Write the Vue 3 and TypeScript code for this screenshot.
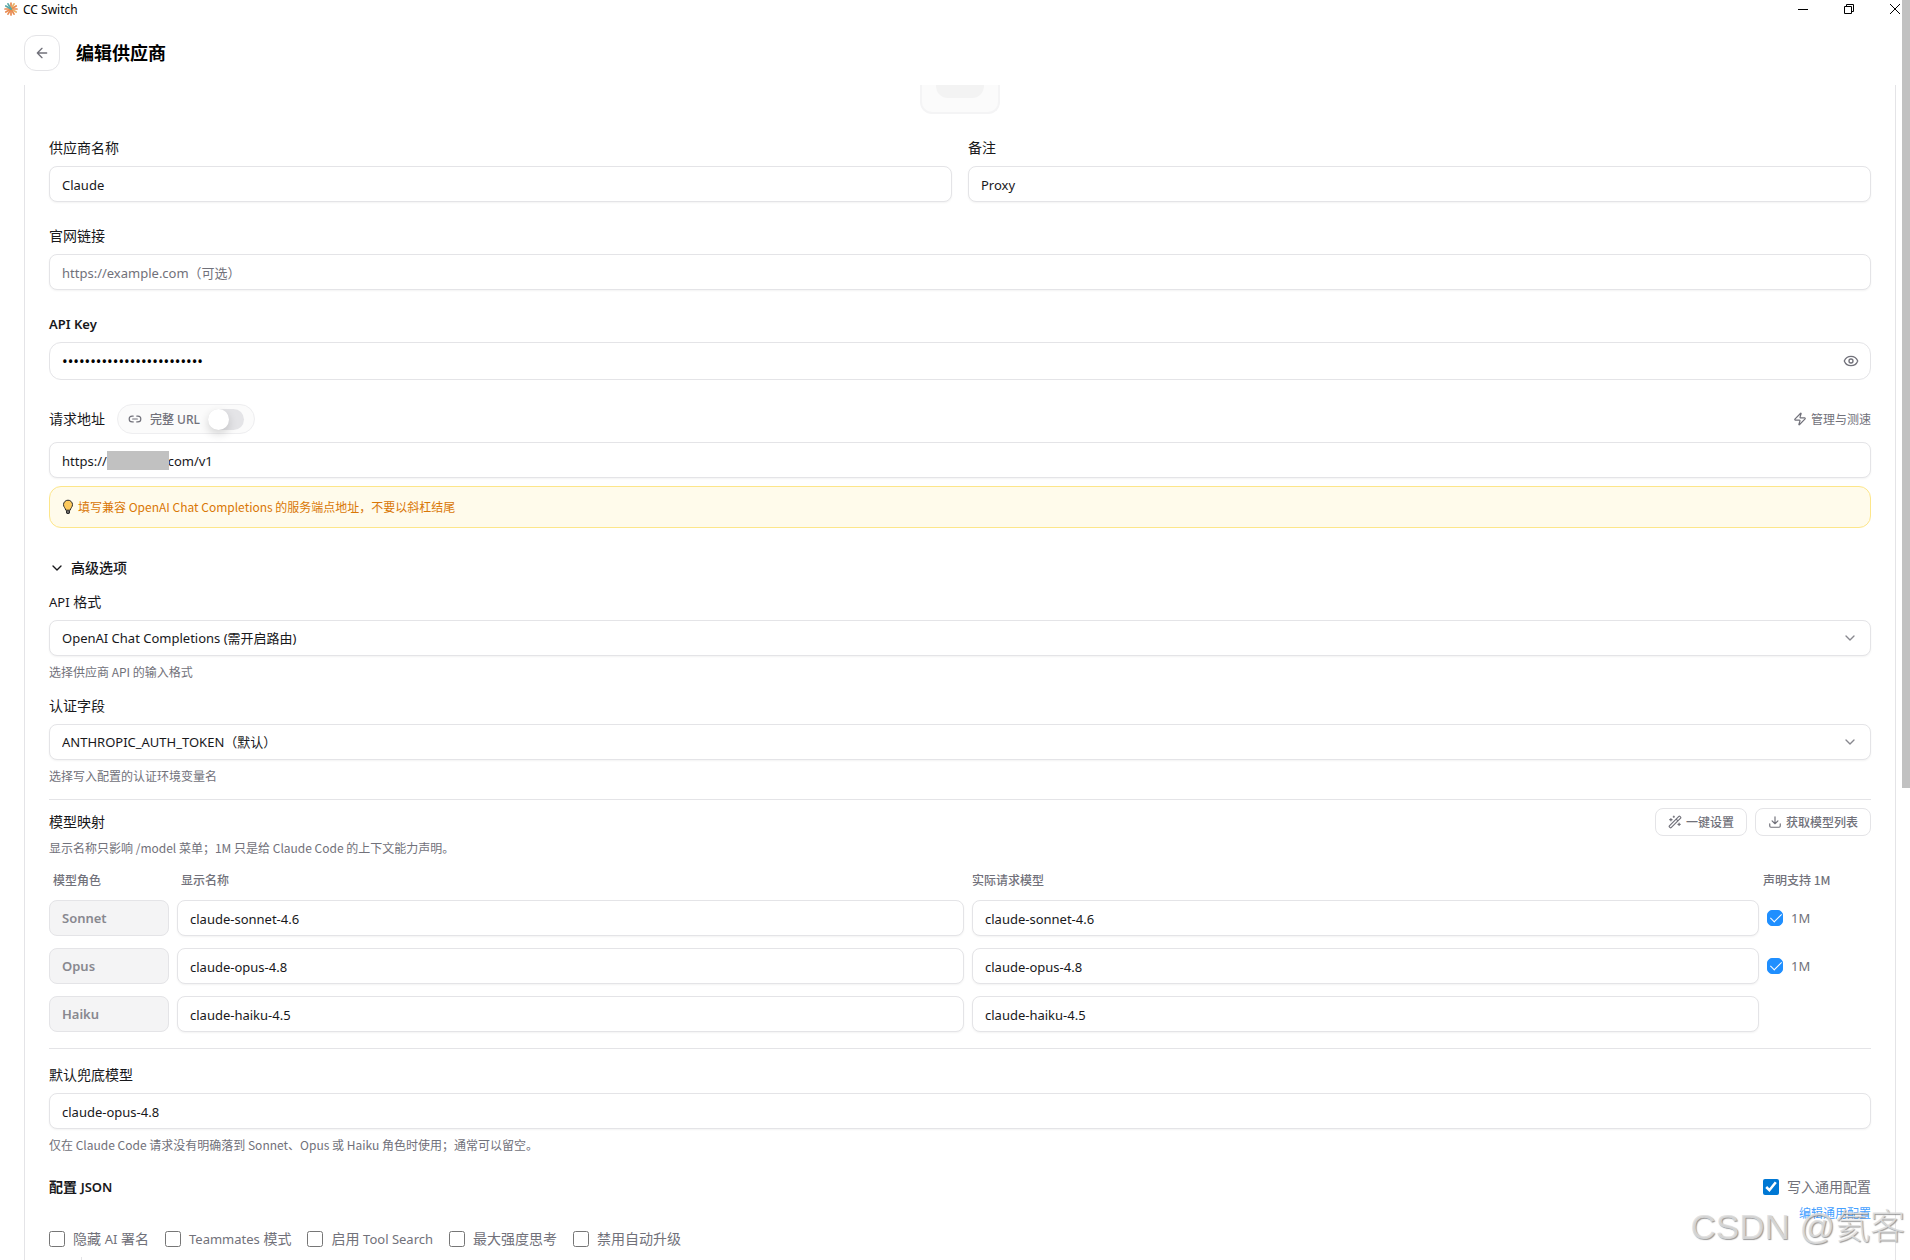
<script setup lang="ts">
import { ref } from 'vue'

interface ModelRow {
  role: string
  display: string
  actual: string
  supports1M: boolean | null
}

interface Toggle {
  id: string
  before: string
  latin: string
  after: string
}

const providerName = ref('Claude')
const notes = ref('Proxy')
const website = ref('')
const apiKey = ref('x'.repeat(25))
const baseUrl = ref(`https://${' '.repeat(18)}com/v1`)
const fullUrl = ref(false)
const fallbackModel = ref('claude-opus-4.8')
const writeCommon = ref(true)

const models = ref<ModelRow[]>([
  { role: 'Sonnet', display: 'claude-sonnet-4.6', actual: 'claude-sonnet-4.6', supports1M: true },
  { role: 'Opus', display: 'claude-opus-4.8', actual: 'claude-opus-4.8', supports1M: true },
  { role: 'Haiku', display: 'claude-haiku-4.5', actual: 'claude-haiku-4.5', supports1M: null },
])

const toggles: Toggle[] = [
  { id: 'hide-ai', before: '隐藏 ', latin: 'AI', after: ' 署名' },
  { id: 'teammates', before: '', latin: 'Teammates', after: ' 模式' },
  { id: 'tool-search', before: '启用 ', latin: 'Tool Search', after: '' },
  { id: 'max-think', before: '最大强度思考', latin: '', after: '' },
  { id: 'no-upgrade', before: '禁用自动升级', latin: '', after: '' },
]

const rays = Array.from({ length: 12 }, (_, i) => i * 30)
</script>

<template>
  <div class="window">
    <div class="main">
      <div class="titlebar">
        <svg class="logo" viewBox="0 0 14 14" aria-hidden="true">
          <g stroke-width="1.7" stroke-linecap="round">
            <line
              v-for="a in rays"
              :key="a"
              x1="7"
              y1="7"
              x2="7"
              y2="1"
              :stroke="a > 280 && a < 340 ? '#5aa7a5' : a === 30 || a === 120 ? '#e9b266' : '#e88a50'"
              :transform="`rotate(${a} 7 7)`"
            />
          </g>
        </svg>
        <span class="app-name">CC Switch</span>
        <div class="win-controls">
          <button type="button" aria-label="最小化">
            <svg viewBox="0 0 10 10"><path d="M0 5.5h10" /></svg>
          </button>
          <button type="button" aria-label="还原">
            <svg viewBox="0 0 10 10"><path d="M.5 2.5h7v7h-7zM2.500 2.500v-2h7v7h-2" /></svg>
          </button>
          <button type="button" aria-label="关闭">
            <svg viewBox="0 0 10 10"><path d="M0 0l10 10M10 0L0 10" /></svg>
          </button>
        </div>
      </div>

      <header class="header">
        <button type="button" class="back" aria-label="返回">
          <svg class="icon" viewBox="0 0 24 24"><path d="m12 19-7-7 7-7M19 12H5" /></svg>
        </button>
        <h1>编辑供应商</h1>
      </header>

      <form class="card" @submit.prevent>
        <div class="picker"><div class="picker-inner"></div></div>

        <div class="two-col">
          <div class="field">
            <label for="name">供应商名称</label>
            <input id="name" v-model="providerName" class="control" type="text" />
          </div>
          <div class="field">
            <label for="notes">备注</label>
            <input id="notes" v-model="notes" class="control" type="text" />
          </div>
        </div>

        <div class="field">
          <label for="site">官网链接</label>
          <input id="site" v-model="website" class="control" type="url" placeholder="https://example.com（可选）" />
        </div>

        <div class="field">
          <label for="key" class="strong"><span class="en">API Key</span></label>
          <div class="key-box">
            <input id="key" v-model="apiKey" type="password" />
            <button type="button" aria-label="显示密钥">
              <svg class="icon" viewBox="0 0 24 24">
                <path d="M2.062 12.348a1 1 0 0 1 0-.696 10.750 10.750 0 0 1 19.876 0 1 1 0 0 1 0 .696 10.750 10.750 0 0 1-19.876 0" />
                <circle cx="12" cy="12" r="3" />
              </svg>
            </button>
          </div>
        </div>

        <div class="field">
          <div class="row url-head">
            <label for="url">请求地址</label>
            <label class="pill">
              <svg class="icon" viewBox="0 0 24 24"><path d="M9 17H7A5 5 0 0 1 7 7h2M15 7h2a5 5 0 1 1 0 10h-2M8 12h8" /></svg>
              <span class="small">完整 URL</span>
              <input v-model="fullUrl" type="checkbox" role="switch" class="switch" />
            </label>
            <button type="button" class="text-btn push">
              <svg class="icon" viewBox="0 0 24 24"><path d="M4 14a1 1 0 0 1-.78-1.630l9.900-10.200a.5.5 0 0 1 .86.460l-1.920 6.020A1 1 0 0 0 13 10h7a1 1 0 0 1 .78 1.630l-9.900 10.200a.5.5 0 0 1-.86-.460l1.920-6.020A1 1 0 0 0 11 14z" /></svg>
              <span class="small">管理与测速</span>
            </button>
          </div>
          <div class="url-box">
            <input id="url" v-model="baseUrl" class="control" type="text" />
            <span class="mask"></span>
          </div>
          <p class="notice">
            <svg class="bulb" viewBox="0 0 12 16" aria-hidden="true">
              <path d="M6 1.200a4.500 4.500 0 0 0-4.500 4.500c0 2.300 1.900 3.300 2.300 5.500h4.400c.4-2.200 2.300-3.200 2.300-5.500A4.500 4.500 0 0 0 6 1.200z" fill="#fcc95c" stroke="#2b2b2b" stroke-width="1" />
              <path d="M4 11.500h4v2.200L7 15H5l-1-1.300z" fill="#2b2b2b" />
              <path d="M5.300 13h1.400" stroke="#ddd" stroke-width="1" />
            </svg>
            <span>填写兼容 OpenAI Chat Completions 的服务端点地址，不要以斜杠结尾</span>
          </p>
        </div>

        <div class="advanced">
          <button type="button" class="disclosure" aria-expanded="true">
            <svg class="icon" viewBox="0 0 24 24"><path d="m6 9 6 6 6-6" /></svg>
            高级选项
          </button>

          <div class="field">
            <label for="format"><span class="en">API</span> 格式</label>
            <div class="select-box">
              <select id="format" class="control">
                <option>OpenAI Chat Completions (需开启路由)</option>
              </select>
              <svg class="icon" viewBox="0 0 24 24"><path d="m6 9 6 6 6-6" /></svg>
            </div>
            <p class="help">选择供应商 API 的输入格式</p>
          </div>

          <div class="field next">
            <label for="auth">认证字段</label>
            <div class="select-box">
              <select id="auth" class="control">
                <option>ANTHROPIC_AUTH_TOKEN（默认）</option>
              </select>
              <svg class="icon" viewBox="0 0 24 24"><path d="m6 9 6 6 6-6" /></svg>
            </div>
            <p class="help">选择写入配置的认证环境变量名</p>
          </div>
        </div>

        <section class="mapping">
          <div class="row">
            <h2>模型映射</h2>
            <button type="button" class="outline push">
              <svg class="icon" viewBox="0 0 24 24"><path d="m21.640 3.640-1.280-1.280a1.210 1.210 0 0 0-1.720 0L2.360 18.640a1.210 1.210 0 0 0 0 1.720l1.280 1.280a1.200 1.200 0 0 0 1.720 0L21.640 5.360a1.200 1.200 0 0 0 0-1.720M14 7l3 3M5 6v4M19 14v4M10 2v2M7 8H3M21 16h-4M11 3H9" /></svg>
              <span class="small">一键设置</span>
            </button>
            <button type="button" class="outline">
              <svg class="icon" viewBox="0 0 24 24"><path d="M21 15v4a2 2 0 0 1-2 2H5a2 2 0 0 1-2-2v-4M7 10l5 5 5-5M12 15V3" /></svg>
              <span class="small">获取模型列表</span>
            </button>
          </div>
          <p class="help">显示名称只影响 /model 菜单；1M 只是给 Claude Code 的上下文能力声明。</p>

          <div class="grid grid-head">
            <span>模型角色</span>
            <span>显示名称</span>
            <span>实际请求模型</span>
            <span>声明支持 1M</span>
          </div>
          <div v-for="m in models" :key="m.role" class="grid">
            <div class="role">{{ m.role }}</div>
            <input v-model="m.display" class="control" type="text" :aria-label="`${m.role} 显示名称`" />
            <input v-model="m.actual" class="control" type="text" :aria-label="`${m.role} 实际请求模型`" />
            <label v-if="m.supports1M !== null" class="check">
              <input v-model="m.supports1M" type="checkbox" class="round-check" />
              <span class="en">1M</span>
            </label>
          </div>
        </section>

        <section class="fallback">
          <div class="field">
            <label for="fallback">默认兜底模型</label>
            <input id="fallback" v-model="fallbackModel" class="control" type="text" />
            <p class="help">仅在 Claude Code 请求没有明确落到 Sonnet、Opus 或 Haiku 角色时使用；通常可以留空。</p>
          </div>
        </section>

        <section class="json">
          <div class="row">
            <h2 class="strong">配置 <span class="en">JSON</span></h2>
            <label class="check push">
              <input v-model="writeCommon" type="checkbox" />
              <span>写入通用配置</span>
            </label>
          </div>
          <a href="#" class="edit-link">编辑通用配置</a>
          <div class="toggles">
            <label v-for="t in toggles" :key="t.id" class="check">
              <input type="checkbox" />
              <span>{{ t.before }}<span class="en">{{ t.latin }}</span>{{ t.after }}</span>
            </label>
          </div>
          <div class="editor"></div>
        </section>
      </form>
    </div>

    <div class="scrollbar"><div class="thumb"></div></div>
    <div class="watermark">CSDN @氦客</div>
  </div>
</template>

<style>
body {
  background: #fff;
}
</style>

<style scoped>
* {
  box-sizing: border-box;
}
.window {
  position: relative;
  display: flex;
  height: 100vh;
  overflow: hidden;
  font-family: "Noto Sans", "Noto Sans CJK SC", sans-serif;
  font-size: 14px;
  line-height: 20px;
  color: #18181b;
}
button,
input,
select {
  font: inherit;
  color: inherit;
}
button {
  padding: 0;
  border: 0;
  background: none;
}
h1,
h2,
p {
  margin: 0;
}
.en {
  font-size: 13px;
}
.small {
  padding-top: 2px;
}
.icon {
  flex: none;
  width: 16px;
  height: 16px;
  fill: none;
  stroke: currentColor;
  stroke-width: 2;
  stroke-linecap: round;
  stroke-linejoin: round;
}
.main {
  flex: 1;
  min-width: 0;
  display: flex;
  flex-direction: column;
}
.titlebar {
  flex: none;
  display: flex;
  align-items: center;
  height: 18px;
  padding-left: 4px;
  color: #000;
}
.logo {
  width: 14px;
  height: 14px;
}
.app-name {
  margin-left: 5px;
  padding-top: 2px;
  font-size: 12px;
  line-height: 16px;
}
.win-controls {
  display: flex;
  gap: 36px;
  margin-left: auto;
  padding-right: 2px;
}
.win-controls button {
  display: flex;
}
.win-controls svg {
  width: 10px;
  height: 10px;
  fill: none;
  stroke: #000;
}
.header {
  flex: none;
  display: flex;
  align-items: center;
  gap: 16px;
  height: 67px;
  padding: 3px 24px 0;
}
.back {
  display: flex;
  align-items: center;
  justify-content: center;
  width: 36px;
  height: 36px;
  border: 1px solid #e4e4e7;
  border-radius: 12px;
  color: #71717a;
}
h1 {
  font-size: 18px;
  line-height: 28px;
  font-weight: 700;
  color: #000;
}
.card {
  flex: 1;
  min-height: 0;
  overflow: hidden;
  margin: 0 6px 0 24px;
  padding: 0 24px;
  border: solid #e4e4e7;
  border-width: 0 1px;
}
.picker {
  width: 80px;
  height: 29px;
  margin: 0 auto 24px;
  padding: 0 14px;
  border: 2px solid #f4f4f5;
  border-top: 0;
  border-radius: 0 0 12px 12px;
  background: #fbfbfb;
}
.picker-inner {
  height: 13px;
  border-radius: 0 0 12px 12px;
  background: #f3f3f3;
}
.two-col {
  display: grid;
  grid-template-columns: 1fr 1fr;
  gap: 16px;
  margin-bottom: 24px;
}
.field {
  display: flex;
  flex-direction: column;
  gap: 8px;
}
.card > .field {
  margin-bottom: 24px;
}
.field.next {
  margin-top: 14px;
}
.strong {
  font-weight: 600;
}
.control {
  display: block;
  width: 100%;
  height: 36px;
  padding: 2px 12px 0;
  border: 1px solid #e4e4e7;
  border-radius: 8px;
  background: #fff;
  box-shadow: 0 1px 2px rgba(0, 0, 0, 0.05);
  font-size: 13px;
  outline: 0;
  appearance: none;
}
.control::placeholder {
  color: #71717a;
}
select.control {
  padding-top: 0;
}
.key-box {
  display: flex;
  align-items: center;
  height: 38px;
  padding: 0 11px 0 12px;
  border: 1px solid #e4e4e7;
  border-radius: 12px;
}
.key-box input {
  flex: 1;
  padding: 0;
  border: 0;
  outline: 0;
  background: none;
  font-size: 15px;
  color: #000;
}
.key-box button {
  display: flex;
  color: #71717a;
}
.row {
  display: flex;
  align-items: center;
  gap: 8px;
}
.push {
  margin-left: auto;
}
.url-head {
  gap: 12px;
}
.pill {
  display: flex;
  align-items: center;
  gap: 8px;
  height: 30px;
  padding: 0 10px;
  border: 1px solid #eeeef0;
  border-radius: 15px;
  background: #fbfbfb;
  color: #71717a;
  font-size: 12px;
  font-weight: 500;
}
.pill .icon {
  width: 14px;
  height: 14px;
}
.switch {
  appearance: none;
  width: 36px;
  height: 21px;
  margin: 0;
  border-radius: 11px;
  background: #e4e4e7;
}
.switch::before {
  content: "";
  display: block;
  width: 21px;
  height: 21px;
  border-radius: 50%;
  background: #fff;
  box-shadow: 0 4px 10px rgba(0, 0, 0, 0.16);
}
.switch:checked::before {
  margin-left: auto;
}
.text-btn {
  display: flex;
  align-items: center;
  gap: 4px;
  font-size: 12px;
  color: #71717a;
}
.text-btn .icon,
.outline .icon {
  width: 14px;
  height: 14px;
}
.url-box,
.select-box {
  position: relative;
}
.mask {
  position: absolute;
  left: 58px;
  top: 9px;
  width: 62px;
  height: 19px;
  background: #c1c1c1;
}
.notice {
  display: flex;
  align-items: center;
  gap: 4px;
  height: 42px;
  padding: 0 12px;
  border: 1px solid #fde68a;
  border-radius: 12px;
  background: #fffbeb;
  font-size: 12px;
  color: #d97706;
}
.notice,
.help,
.grid-head {
  font-family: "Noto Sans CJK SC", sans-serif;
}
.bulb {
  width: 12px;
  height: 16px;
}
.disclosure {
  display: flex;
  align-items: center;
  gap: 6px;
  height: 32px;
  margin-bottom: 8px;
  font-weight: 500;
}
.select-box .icon {
  position: absolute;
  right: 13px;
  top: 10px;
  color: #88888f;
  pointer-events: none;
}
.help {
  font-size: 12px;
  line-height: 16px;
  color: #71717a;
}
.field.next {
  margin-top: 16px;
}
.mapping {
  margin-top: 15px;
  padding-top: 8px;
  border-top: 1px solid #e4e4e7;
}
h2 {
  font-size: 14px;
  line-height: 20px;
  font-weight: 400;
}
h2.strong {
  font-weight: 600;
}
.outline {
  display: flex;
  align-items: center;
  gap: 4px;
  height: 28px;
  padding: 0 12px;
  border: 1px solid #e4e4e7;
  border-radius: 8px;
  font-size: 12px;
  font-weight: 500;
  color: #71717a;
}
.mapping .help {
  margin-top: 4px;
}
.grid {
  display: grid;
  grid-template-columns: 120px 1fr 1fr 104px;
  gap: 8px;
}
.grid + .grid {
  margin-top: 12px;
}
.grid-head {
  margin-top: 16px;
  padding: 0 4px;
  font-size: 12px;
  line-height: 16px;
  font-weight: 500;
  color: #71717a;
}
.role {
  display: flex;
  align-items: center;
  padding: 0 12px;
  border: 1px solid #e4e4e7;
  border-radius: 8px;
  background: #f4f4f5;
  font-size: 13px;
  font-weight: 600;
  color: #88888f;
}
.check {
  display: flex;
  align-items: center;
  gap: 8px;
  color: #71717a;
}
.check input {
  flex: none;
  width: 16px;
  height: 16px;
  margin: 0;
  accent-color: #0078d4;
}
.check .round-check {
  appearance: none;
  display: flex;
  border-radius: 5px;
  border: 1px solid #1f8fff;
}
.round-check:checked {
  background: #1f8fff;
}
.round-check:checked::after {
  content: "";
  width: 5px;
  height: 10px;
  margin-left: 5px;
  border: solid #fff;
  border-width: 0 1px 1px 0;
  transform: rotate(45deg);
}
.fallback {
  margin-top: 16px;
  padding-top: 16px;
  border-top: 1px solid #e4e4e7;
}
.json {
  display: flex;
  flex-direction: column;
  margin-top: 24px;
}
.edit-link {
  align-self: flex-end;
  margin: 8px 0 6px;
  font-size: 12px;
  line-height: 18px;
  color: #45a0ff;
  text-decoration: none;
}
.toggles {
  display: flex;
  gap: 16px;
}
.editor {
  height: 200px;
  margin: 8px 0 0 32px;
  border-left: 1px solid #e4e4e7;
}
.scrollbar {
  flex: none;
  width: 8px;
}
.thumb {
  height: 788px;
  background: #c1c1c1;
}
.watermark {
  position: absolute;
  right: 5px;
  bottom: 9px;
  font-family: "Liberation Sans", "Noto Sans CJK SC", sans-serif;
  font-size: 35px;
  line-height: 48px;
  font-weight: 300;
  color: rgba(222, 222, 222, 0.85);
  text-shadow: 1px 1px 1px rgba(110, 110, 110, 0.7);
  pointer-events: none;
}
</style>
